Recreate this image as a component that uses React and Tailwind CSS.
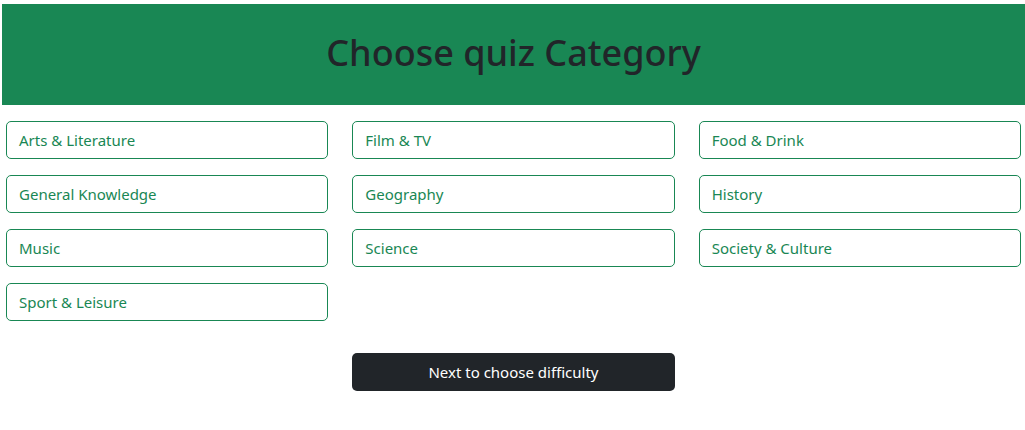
import React, { useState } from 'react';

const categories = [
  'Arts & Literature',
  'Film & TV',
  'Food & Drink',
  'General Knowledge',
  'Geography',
  'History',
  'Music',
  'Science',
  'Society & Culture',
  'Sport & Leisure',
];

const App = () => {
  const [selected, setSelected] = useState(null);

  return (
    <div className="min-h-screen bg-white pt-[4px] text-[#212529]" style={{ fontFamily: '"Noto Sans", "Open Sans", sans-serif' }}>
      {/* ヘッダー */}
      <div className="ml-[2px] flex h-[101px] items-center justify-center bg-[#198754] pb-[3px]">
        <h1 className="text-[36px] font-medium leading-none text-[#212529]">Choose quiz Category</h1>
      </div>

      {/* カテゴリ一覧 */}
      <div className="mt-[16px] grid grid-cols-3 gap-x-6 gap-y-4 pl-[6px] pr-[4px]">
        {categories.map((c) => (
          <button
            key={c}
            onClick={() => setSelected(c)}
            className={
              selected === c
                ? 'h-[38px] rounded-[5px] border border-[#198754] bg-[#198754] px-3 text-left text-[15px] text-white'
                : 'h-[38px] rounded-[5px] border border-[#198754] bg-white px-3 text-left text-[15px] text-[#198754]'
            }
          >
            {c}
          </button>
        ))}
      </div>

      {/* 次へボタン */}
      <div className="mt-[32px] grid grid-cols-3 gap-x-6 pl-[6px] pr-[4px]">
        <button className="col-start-2 h-[38px] rounded-[5px] bg-[#212529] text-[15px] text-white">
          Next to choose difficulty
        </button>
      </div>
    </div>
  );
};

export default App;
